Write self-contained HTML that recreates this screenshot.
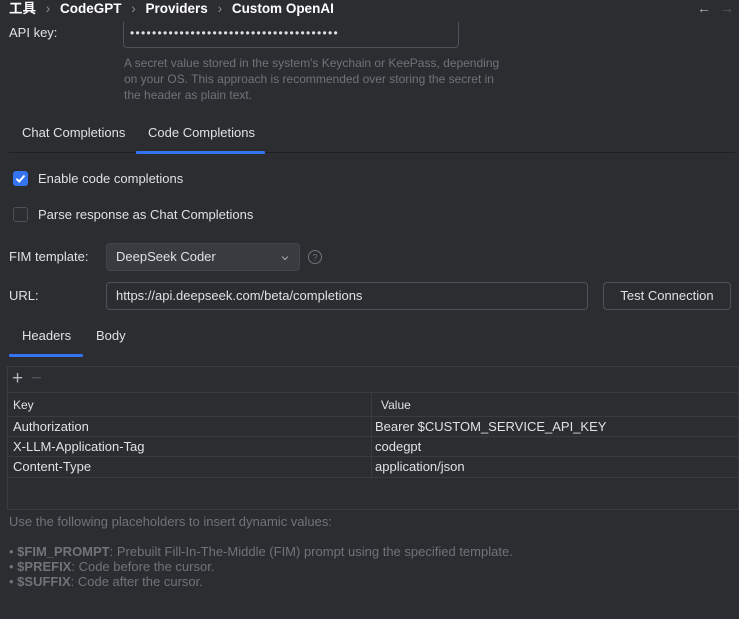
<!DOCTYPE html>
<html><head><meta charset="utf-8"><style>
*{margin:0;padding:0;box-sizing:border-box}
body{width:739px;height:619px;background:#2b2d30;color:#dfe1e5;font-family:"Liberation Sans","Noto Sans CJK SC",sans-serif;font-size:13px;position:relative;overflow:hidden}
.a{position:absolute;white-space:nowrap}
.g{color:#6f737a;font-size:12px}
.box{position:absolute;border:1px solid #4e5157;border-radius:4px}
</style></head><body>
<div class="a" style="left:9px;top:0;font-weight:bold;font-size:13.5px;color:#fff;line-height:17px">工具 <span style="color:#8b8e94;font-weight:normal;margin:0 6px">›</span> CodeGPT <span style="color:#8b8e94;font-weight:normal;margin:0 6px">›</span> Providers <span style="color:#8b8e94;font-weight:normal;margin:0 6px">›</span> Custom OpenAI</div>
<div class="a" style="left:697px;top:0;color:#b4b8bf;font-size:14px">←</div>
<div class="a" style="left:720px;top:0;color:#5a5d63;font-size:14px">→</div>
<div class="a" style="left:9px;top:25px;line-height:16px">API key:</div>
<div class="box" style="left:123px;top:22px;width:336px;height:26px;border-top:none;border-radius:0 0 4px 4px"></div>
<div class="a" style="left:130px;top:25px;font-size:12px;letter-spacing:1.3px;line-height:16px">••••••••••••••••••••••••••••••••••••••</div>
<div class="a g" style="left:124px;top:55px;line-height:16px">A secret value stored in the system's Keychain or KeePass, depending<br>on your OS. This approach is recommended over storing the secret in<br>the header as plain text.</div>
<div class="a" style="left:22px;top:125px;line-height:16px">Chat Completions</div>
<div class="a" style="left:148px;top:125px;line-height:16px">Code Completions</div>
<div class="a" style="left:9px;top:152px;width:726px;height:1px;background:#1e1f22"></div>
<div class="a" style="left:136px;top:151px;width:129px;height:3px;background:#3574f0;border-radius:1px"></div>
<div class="a" style="left:13px;top:171px;width:15px;height:15px;background:#3574f0;border-radius:3px"></div>
<svg class="a" style="left:13px;top:171px" width="15" height="15"><path d="M3.5 7.8l2.7 2.7 5.3-6" stroke="#fff" stroke-width="2" fill="none"/></svg>
<div class="a" style="left:38px;top:171px;line-height:16px">Enable code completions</div>
<div class="a" style="left:13px;top:207px;width:15px;height:15px;border:1px solid #4e5157;border-radius:3px"></div>
<div class="a" style="left:38px;top:207px;line-height:16px">Parse response as Chat Completions</div>
<div class="a" style="left:9px;top:249px;line-height:16px">FIM template:</div>
<div class="box" style="left:106px;top:243px;width:194px;height:28px;background:#393b40;border-color:#43454a"></div>
<div class="a" style="left:116px;top:249px;line-height:16px">DeepSeek Coder</div>
<svg class="a" style="left:280px;top:254px" width="10" height="8"><path d="M2 2.5l3 3 3-3" stroke="#9a9da3" stroke-width="1.2" fill="none"/></svg>
<svg class="a" style="left:307px;top:249px" width="16" height="16"><circle cx="8" cy="8" r="6.5" stroke="#6f737a" fill="none"/><text x="8" y="11.5" font-size="9" fill="#6f737a" text-anchor="middle" font-family="Liberation Sans">?</text></svg>
<div class="a" style="left:9px;top:288px;line-height:16px">URL:</div>
<div class="box" style="left:106px;top:282px;width:482px;height:28px"></div>
<div class="a" style="left:116px;top:288px;line-height:16px">https://api.deepseek.com/beta/completions</div>
<div class="box" style="left:603px;top:282px;width:128px;height:28px"></div>
<div class="a" style="left:603px;top:288px;width:128px;text-align:center;line-height:16px">Test Connection</div>
<div class="a" style="left:22px;top:328px;line-height:16px">Headers</div>
<div class="a" style="left:96px;top:328px;line-height:16px">Body</div>
<div class="a" style="left:9px;top:354px;width:74px;height:3px;background:#3574f0;border-radius:1px"></div>
<div class="a" style="left:7px;top:366px;width:732px;height:144px;border:1px solid #393b40"></div>
<div class="a" style="left:12px;top:368px;font-size:19px;color:#b4b8bf;line-height:22px">+</div>
<div class="a" style="left:31px;top:368px;font-size:19px;color:#4e5157;line-height:22px">−</div>
<div class="a" style="left:8px;top:392px;width:730px;height:1px;background:#393b40"></div>
<div class="a" style="left:13px;top:397px;font-size:12px;line-height:16px">Key</div>
<div class="a" style="left:381px;top:397px;font-size:12px;line-height:16px">Value</div>
<div class="a" style="left:371px;top:393px;width:1px;height:84px;background:#393b40"></div>
<div class="a" style="left:8px;top:416px;width:730px;height:1px;background:#393b40"></div>
<div class="a" style="left:8px;top:436px;width:730px;height:1px;background:#393b40"></div>
<div class="a" style="left:8px;top:456px;width:730px;height:1px;background:#393b40"></div>
<div class="a" style="left:8px;top:477px;width:730px;height:1px;background:#393b40"></div>
<div class="a" style="left:13px;top:419px;line-height:16px">Authorization</div>
<div class="a" style="left:375px;top:419px;line-height:16px">Bearer $CUSTOM_SERVICE_API_KEY</div>
<div class="a" style="left:13px;top:439px;line-height:16px">X-LLM-Application-Tag</div>
<div class="a" style="left:375px;top:439px;line-height:16px">codegpt</div>
<div class="a" style="left:13px;top:459px;line-height:16px">Content-Type</div>
<div class="a" style="left:375px;top:459px;line-height:16px">application/json</div>
<div class="a g" style="left:9px;top:514px;font-size:13px;line-height:16px">Use the following placeholders to insert dynamic values:</div>
<div class="a g" style="left:9px;top:544px;font-size:13px;line-height:15px">• <b>$FIM_PROMPT</b>: Prebuilt Fill-In-The-Middle (FIM) prompt using the specified template.<br>• <b>$PREFIX</b>: Code before the cursor.<br>• <b>$SUFFIX</b>: Code after the cursor.</div>
</body></html>
